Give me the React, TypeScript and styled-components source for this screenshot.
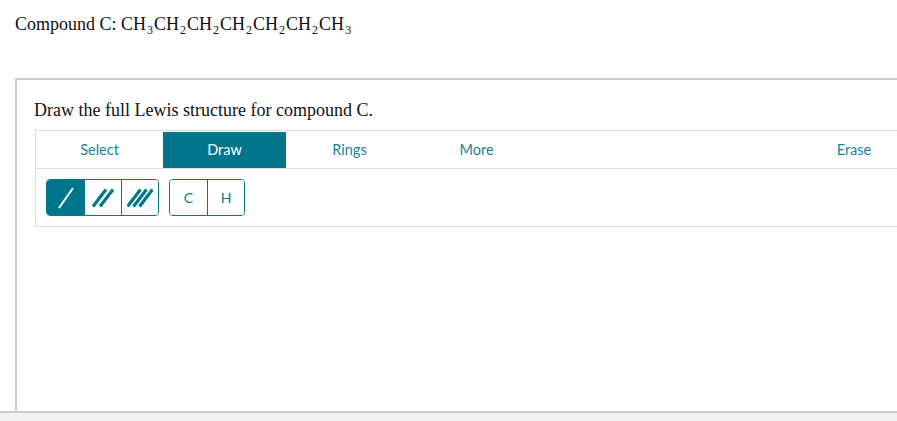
import React from 'react';
import styled, { createGlobalStyle } from 'styled-components';

const teal = '#00768d';
const tealText = '#17839a';

const GlobalStyle = createGlobalStyle`
  html, body {
    margin: 0;
    padding: 0;
    background: #ffffff;
    overflow: hidden;
  }
`;

const Page = styled.div`
  width: 897px;
  height: 421px;
  display: flex;
  flex-direction: column;
  background: #f2f2f2;
`;

const Main = styled.div`
  flex: 1;
  display: flex;
  flex-direction: column;
  background: #ffffff;
  padding-left: 15px;
  border-bottom: 2px solid #cccccc;
`;

const Formula = styled.p`
  margin: 12px 0 0;
  height: 24px;
  line-height: 24px;
  font-family: 'Liberation Serif', 'Times New Roman', serif;
  font-size: 18px;
  color: #111;

  & sub {
    font-size: 12px;
    vertical-align: -4px;
    line-height: 0;
    margin: 0 1px 0 1px;
  }
`;

const Question = styled.section`
  flex: 1;
  margin-top: 42px;
  border-top: 2px solid #cccccc;
  border-left: 2px solid #cccccc;
  padding: 20px 0 0 17px;
  display: flex;
  flex-direction: column;
`;

const Prompt = styled.p`
  margin: 0 0 9px;
  line-height: 21px;
  font-family: 'Liberation Serif', 'Times New Roman', serif;
  font-size: 18px;
  color: #111;
`;

const Toolbar = styled.div`
  width: 900px;
  margin-left: 1px;
  border: 1px solid #dddddd;
  border-right: none;
`;

const Tabs = styled.div`
  display: flex;
  height: 38px;
  padding-top: 1px;
  border-bottom: 1px solid #dddddd;
  box-sizing: border-box;
`;

const Tab = styled.div<{ $active?: boolean; $w: number }>`
  width: ${(p) => p.$w}px;
  height: 36px;
  display: flex;
  align-items: center;
  justify-content: center;
  padding-bottom: 1px;
  box-sizing: border-box;
  font-family: Lato, 'Noto Sans', sans-serif;
  font-size: 14.5px;
  color: ${(p) => (p.$active ? '#ffffff' : tealText)};
  background: ${(p) => (p.$active ? teal : 'transparent')};
`;

const Spacer = styled.div`
  flex: 1;
`;

const Tools = styled.div`
  display: flex;
  gap: 10px;
  padding: 10px 0 10px 10px;
  height: 57px;
  box-sizing: border-box;
`;

const Group = styled.div`
  display: flex;
  border: 1px solid ${teal};
  border-radius: 4px;
  overflow: hidden;
  height: 37px;
  box-sizing: border-box;
`;

const ToolButton = styled.div<{ $active?: boolean }>`
  width: 37px;
  display: flex;
  align-items: center;
  justify-content: center;
  background: ${(p) => (p.$active ? teal : '#ffffff')};
  color: ${teal};
  font-family: Lato, 'Noto Sans', sans-serif;
  font-size: 14px;
  box-sizing: border-box;

  & + & {
    border-left: 1px solid ${teal};
  }
`;

// bond glyph: one, two or three parallel slanted strokes
const Bond = ({ count, color }: { count: number; color: string }) => {
  const offsets = count === 1 ? [0] : count === 2 ? [-3.5, 3.5] : [-6, 0, 6];
  const single = count === 1;
  return (
    <svg width="26" height="24" viewBox="0 0 26 24">
      {offsets.map((o) => (
        <line
          key={o}
          x1={(single ? 6 : 6.5) + o}
          y1={single ? 22 : 20.5}
          x2={(single ? 20 : 19.5) + o}
          y2={single ? 2 : 3.5}
          stroke={color}
          strokeWidth={single ? 2 : 3.2}
          strokeLinecap="butt"
        />
      ))}
    </svg>
  );
};

const Canvas = styled.div`
  flex: 1;
`;

const Footer = styled.div`
  height: 8px;
  background: #f2f2f2;
`;

const tabs = [
  { label: 'Select', w: 127 },
  { label: 'Draw', w: 123, active: true },
  { label: 'Rings', w: 127 },
  { label: 'More', w: 127 },
];

export default function App() {
  return (
    <>
      <GlobalStyle />
      <Page>
        <Main>
          <Formula>
            Compound C: CH<sub>3</sub>CH<sub>2</sub>CH<sub>2</sub>CH<sub>2</sub>CH<sub>2</sub>CH<sub>2</sub>CH<sub>3</sub>
          </Formula>
          <Question>
            <Prompt>Draw the full Lewis structure for compound C.</Prompt>
            <Toolbar>
              <Tabs>
                {tabs.map((t) => (
                  <Tab key={t.label} $w={t.w} $active={t.active}>
                    {t.label}
                  </Tab>
                ))}
                <Spacer />
                <Tab $w={164}>Erase</Tab>
              </Tabs>
              <Tools>
                <Group>
                  <ToolButton $active>
                    <Bond count={1} color="#ffffff" />
                  </ToolButton>
                  <ToolButton>
                    <Bond count={2} color={teal} />
                  </ToolButton>
                  <ToolButton>
                    <Bond count={3} color={teal} />
                  </ToolButton>
                </Group>
                <Group>
                  <ToolButton>C</ToolButton>
                  <ToolButton>H</ToolButton>
                </Group>
              </Tools>
            </Toolbar>
            <Canvas />
          </Question>
        </Main>
        <Footer />
      </Page>
    </>
  );
}
